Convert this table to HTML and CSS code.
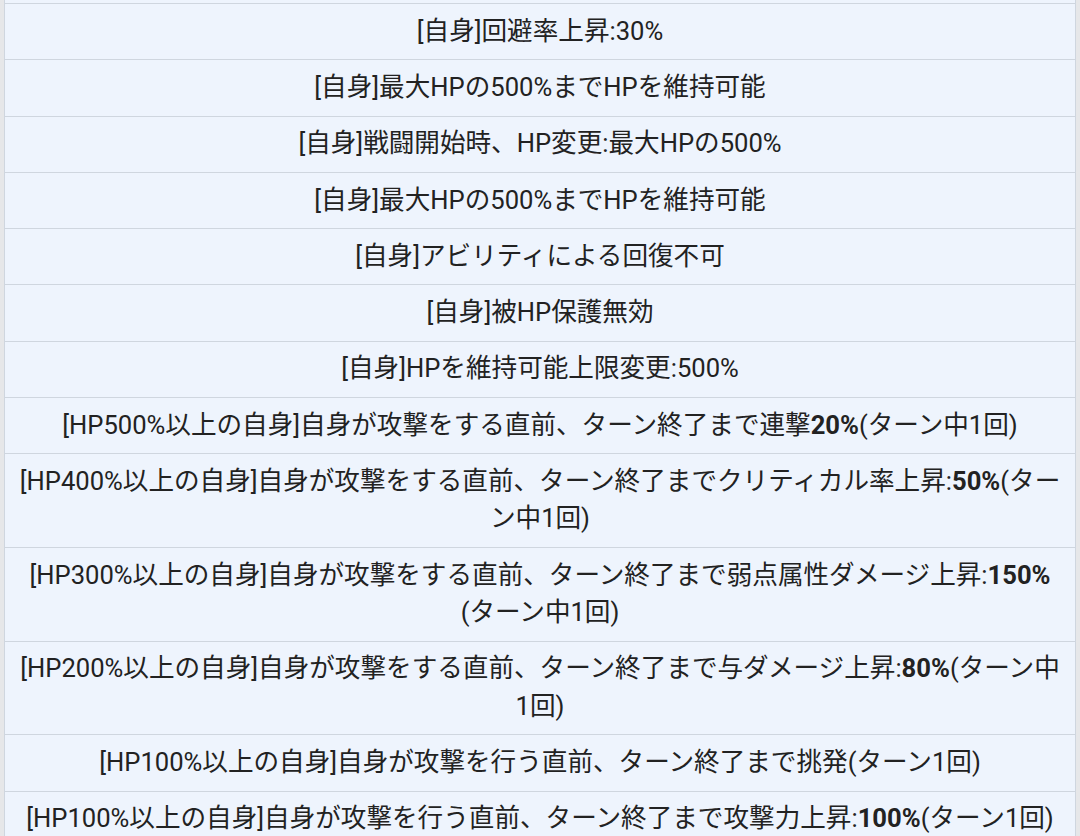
FILE: index.html
```html
<!DOCTYPE html>
<html lang="ja">
<head>
<meta charset="utf-8">
<title>Skills</title>
<link rel="stylesheet" href="styles.css">
</head>
<body>
<div class="page">
  <div class="prev-row"></div>
  <table class="effects">
    <tbody>
      <tr><td>[自身]回避率上昇:30%</td></tr>
      <tr><td>[自身]最大HPの500%までHPを維持可能</td></tr>
      <tr><td>[自身]戦闘開始時、HP変更:最大HPの500%</td></tr>
      <tr><td>[自身]最大HPの500%までHPを維持可能</td></tr>
      <tr><td>[自身]アビリティによる回復不可</td></tr>
      <tr><td>[自身]被HP保護無効</td></tr>
      <tr><td>[自身]HPを維持可能上限変更:500%</td></tr>
      <tr><td>[HP500%以上の自身]自身が攻撃をする直前、ターン終了まで連撃<b>20%</b>(ターン中1回)</td></tr>
      <tr><td>[HP400%以上の自身]自身が攻撃をする直前、ターン終了までクリティカル率上昇:<b>50%</b>(ターン中1回)</td></tr>
      <tr><td>[HP300%以上の自身]自身が攻撃をする直前、ターン終了まで弱点属性ダメージ上昇:<b>150%</b><wbr>(ターン中1回)</td></tr>
      <tr><td>[HP200%以上の自身]自身が攻撃をする直前、ターン終了まで与ダメージ上昇:<b>80%</b>(ターン中1回)</td></tr>
      <tr><td>[HP100%以上の自身]自身が攻撃を行う直前、ターン終了まで挑発(ターン1回)</td></tr>
      <tr><td>[HP100%以上の自身]自身が攻撃を行う直前、ターン終了まで攻撃力上昇:<b>100%</b>(ターン1回)</td></tr>
    </tbody>
  </table>
</div>
</body>
</html>
```

FILE: styles.css
```css
html, body {
  margin: 0;
  padding: 0;
  background: #e6e7e9;
}

.page {
  padding: 0 4px;
  font-family: Roboto, "Noto Sans CJK JP", sans-serif;
  font-size: 25.6px;
  line-height: 37.5px;
  color: #222222;
}

.prev-row {
  height: 3px;
  background: #eef4fd;
  border-left: 1px solid #cfd6df;
  border-right: 1px solid #cfd6df;
}

.effects {
  width: 100%;
  border-collapse: collapse;
  background: #eef4fd;
}

.effects td {
  border: 1px solid #cfd6df;
  padding: 8.875px 12px;
  text-align: center;
  vertical-align: middle;
}

.effects b {
  font-weight: 700;
}
```
